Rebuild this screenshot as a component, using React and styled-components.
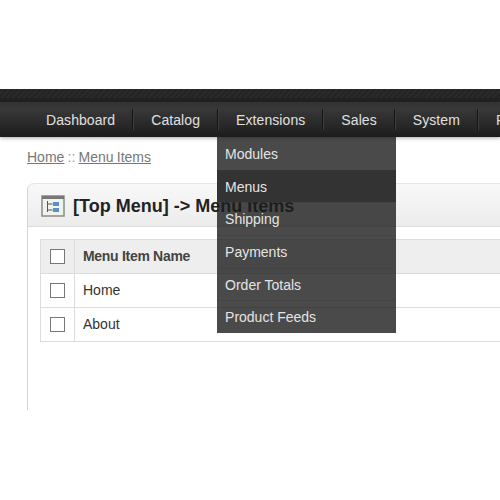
import React from "react";
import styled, {createGlobalStyle} from "styled-components";

const GlobalStyle = createGlobalStyle`
  html, body { margin: 0; padding: 0; background: #fff; }
  body { font-family: "Liberation Sans", Arial, sans-serif; }
`
const Page = styled.div`
  width: 500px;
  height: 500px;
  overflow: hidden;
  padding-top: 89px;
  box-sizing: border-box;
  background: #fff;
`
const TopStrip = styled.div`
  height: 13px;
  background: linear-gradient(transparent 9px, #222 9px),
    repeating-linear-gradient(135deg, #242424 0 2px, #2a2a2a 2px 4px);
`
const NavBar = styled.div`
  display: flex;
  height: 35px;
  padding-left: 28px;
  background: linear-gradient(#333, #383838 20%, #1c1c1c);
  box-shadow: 0 1px 4px rgba(0, 0, 0, .35);
  white-space: nowrap;
`
const NavItem = styled.div`
  position: relative;
  display: flex;
  align-items: center;
  padding: 0 18px;
  font-size: 14px;
  letter-spacing: .08px;
  color: #e0e0e0;
  &:not(:last-child)::after {
    content: "";
    position: absolute;
    right: 0;
    top: 7px;
    bottom: 7px;
    width: 1px;
    background: #141414;
    box-shadow: 1px 0 0 #3e3e3e;
  }
`
const Dropdown = styled.div`
  position: absolute;
  z-index: 5;
  top: 35px;
  left: -1px;
  width: 179px;
  background: rgba(29, 29, 29, .8);
`
const DropItem = styled.div`
  height: 32.7px;
  line-height: 33px;
  padding-left: 8px;
  font-size: 14px;
  letter-spacing: 0;
  color: #e4e4e4;
  box-sizing: border-box;
  background: ${props => props.$active ? '#333' : 'transparent'};
  border-top: 1px solid ${props => props.$active ? '#333' : 'rgba(60, 60, 60, .35)'};
`
const Content = styled.div`
  padding: 12px 0 0 27px;
`
const Breadcrumb = styled.div`
  font-size: 14px;
  line-height: 16px;
  word-spacing: -.7px;
  color: #999;
  a {
    color: #777;
    text-decoration: underline;
  }
`
const Box = styled.div`
  width: 620px;
  height: 227px;
  margin-top: 18px;
  box-sizing: border-box;
  border-left: 1px solid #d4d4d4;
  border-top-left-radius: 7px;
`
const BoxHeader = styled.div`
  display: flex;
  align-items: center;
  gap: 8px;
  height: 44px;
  padding: 2px 0 0 13px;
  background: linear-gradient(#f8f8f8, #ececec);
  border-top: 1px solid #e6e6e6;
  border-bottom: 1px solid #dcdcdc;
  border-top-left-radius: 7px;
  box-sizing: border-box;
`
const Title = styled.h1`
  margin: 0;
  font-size: 18px;
  font-weight: bold;
  color: #222;
  white-space: nowrap;
`
const BoxBody = styled.div`
  padding: 12px 0 0 12px;
`
const Table = styled.div`
  border: 1px solid #ddd;
  border-right: 0;
`
const Row = styled.div`
  display: flex;
  height: 33px;
  background: ${props => props.$head ? '#eeeeee' : '#fff'};
  &:not(:last-child) {
    border-bottom: 1px solid #ddd;
  }
`
const CheckCell = styled.div`
  display: flex;
  align-items: center;
  justify-content: center;
  width: 34px;
  padding-right: 1px;
  box-sizing: border-box;
  border-right: 1px solid #ddd;
`
const NameCell = styled.div`
  display: flex;
  align-items: center;
  padding: 0 0 2px 8px;
  font-size: 14px;
  font-weight: ${props => props.$head ? 'bold' : 'normal'};
  letter-spacing: ${props => props.$head ? '-.3px' : '0'};
  color: ${props => props.$head ? '#444' : '#333'};
`
const Check = styled.span`
  width: 13px;
  height: 13px;
  background: #fff;
  border: 1px solid #777;
`

const navItems = ['Dashboard', 'Catalog', 'Extensions', 'Sales', 'System', 'Reports']
const extensionItems = ['Modules', 'Menus', 'Shipping', 'Payments', 'Order Totals', 'Product Feeds']

const TreeIcon = () => (
    <svg width="24" height="22" viewBox="0 0 24 22">
        <rect x="1" y="1" width="22" height="20" fill="#f2f2ec" stroke="#8a8a8a" strokeWidth="1.5"/>
        <rect x="1" y="1" width="22" height="3" fill="#777"/>
        <path d="M6.5 6v11M6.5 9h5M6.5 15h5" fill="none" stroke="#555"/>
        <rect x="12" y="7" width="6" height="4" fill="#5c8fc9"/>
        <rect x="12" y="13" width="6" height="4" fill="#5c8fc9"/>
    </svg>
)

export default function App() {
    return (
        <Page>
            <GlobalStyle/>
            <TopStrip/>
            <NavBar>
                {navItems.map(item => (
                    <NavItem key={item}>
                        {item}
                        {item === 'Extensions' && (
                            <Dropdown>
                                {extensionItems.map(sub => (
                                    <DropItem key={sub} $active={sub === 'Menus'}>{sub}</DropItem>
                                ))}
                            </Dropdown>
                        )}
                    </NavItem>
                ))}
            </NavBar>
            <Content>
                <Breadcrumb><a>Home</a> :: <a>Menu Items</a></Breadcrumb>
                <Box>
                    <BoxHeader>
                        <TreeIcon/>
                        <Title>[Top Menu] -&gt; Menu Items</Title>
                    </BoxHeader>
                    <BoxBody>
                        <Table>
                            <Row $head>
                                <CheckCell><Check/></CheckCell>
                                <NameCell $head>Menu Item Name</NameCell>
                            </Row>
                            <Row>
                                <CheckCell><Check/></CheckCell>
                                <NameCell>Home</NameCell>
                            </Row>
                            <Row>
                                <CheckCell><Check/></CheckCell>
                                <NameCell>About</NameCell>
                            </Row>
                        </Table>
                    </BoxBody>
                </Box>
            </Content>
        </Page>
    )
}
